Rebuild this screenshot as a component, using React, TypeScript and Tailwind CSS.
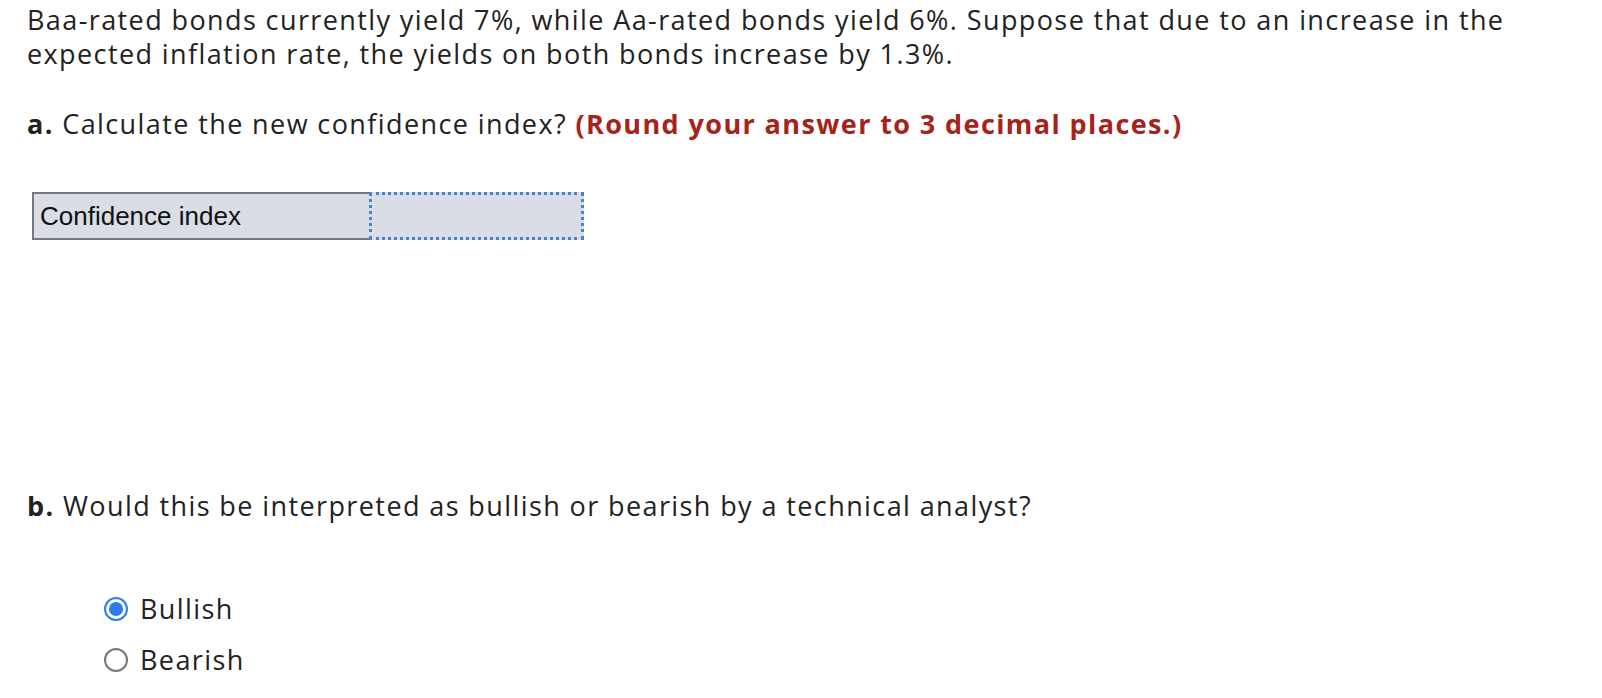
import React, { useState } from 'react';

export default function App() {
  const [choice, setChoice] = useState<'bullish' | 'bearish'>('bullish');

  return (
    <div className="w-[1602px] h-[698px] bg-white text-[#222] font-['Open_Sans','Noto_Sans',sans-serif] text-[27px] leading-[34px] tracking-[1.4px] pl-[27px] pt-[3px]">
      <p className="whitespace-nowrap">
        Baa-rated bonds currently yield 7%, while Aa-rated bonds yield 6%. Suppose that due to an increase in the
        <br />
        expected inflation rate, the yields on both bonds increase by 1.3%.
      </p>

      <p className="mt-[36px] whitespace-nowrap">
        <b className="font-bold">a.</b> Calculate the new confidence index?{' '}
        <b className="font-bold text-[#a6231b]">(Round your answer to 3 decimal places.)</b>
      </p>

      <div className="mt-[51px] ml-[5px] flex w-fit h-[48px] bg-[#d9dde6]">
        <div className="w-[337px] shrink-0 flex items-center pl-[6px] border-2 border-r-0 border-[#777] font-['Liberation_Sans',Arial,sans-serif] text-[26px] tracking-normal text-[#111]">
          Confidence index
        </div>
        <input
          className="w-[215px] shrink-0 bg-transparent border-[3px] border-dotted border-[#4a80d0] outline-none px-2 text-[22px] font-['Liberation_Sans',Arial,sans-serif]"
          aria-label="Confidence index"
        />
      </div>

      <p className="mt-[249px] whitespace-nowrap">
        <b className="font-bold">b.</b> Would this be interpreted as bullish or bearish by a technical analyst?
      </p>

      <div className="mt-[69px] ml-[77px] flex flex-col gap-[17px]">
        {(['bullish', 'bearish'] as const).map((v) => (
          <label key={v} className="flex items-center gap-[12px] cursor-pointer">
            <span
              className={
                choice === v
                  ? 'w-[24px] h-[24px] rounded-full border-[2px] border-[#2f7bf5] flex items-center justify-center'
                  : 'w-[24px] h-[24px] rounded-full border-[2px] border-[#777] flex items-center justify-center'
              }
            >
              {choice === v && <span className="w-[14px] h-[14px] rounded-full bg-[#2f7bf5]" />}
            </span>
            <input
              type="radio"
              name="sentiment"
              className="sr-only"
              checked={choice === v}
              onChange={() => setChoice(v)}
            />
            <span>{v === 'bullish' ? 'Bullish' : 'Bearish'}</span>
          </label>
        ))}
      </div>
    </div>
  );
}
